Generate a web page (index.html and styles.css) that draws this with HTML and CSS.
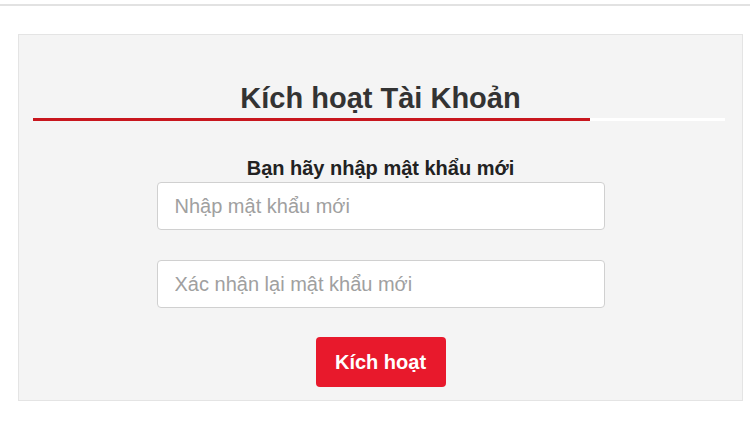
FILE: index.html
```html
<!DOCTYPE html>
<html lang="vi">
<head>
<meta charset="utf-8">
<title>Kích hoạt Tài Khoản</title>
<link rel="stylesheet" href="styles.css">
</head>
<body>
<div class="topbar"></div>
<main class="card">
  <h1 class="title">Kích hoạt Tài Khoản</h1>
  <div class="rule"></div>
  <form class="form">
    <p class="subtitle">Bạn hãy nhập mật khẩu mới</p>
    <input class="field" type="password" placeholder="Nhập mật khẩu mới">
    <input class="field field-second" type="password" placeholder="Xác nhận lại mật khẩu mới">
    <button class="btn" type="button">Kích hoạt</button>
  </form>
</main>
</body>
</html>
```
FILE: styles.css
```css
html, body {
  margin: 0;
  padding: 0;
  background: #ffffff;
  font-family: "Liberation Sans", Arial, sans-serif;
}
.topbar {
  height: 4px;
  border-bottom: 2px solid #e2e2e2;
}
.card {
  box-sizing: border-box;
  margin: 28px 7px 0 18px;
  height: 367px;
  background: #f4f4f4;
  border: 1px solid #e4e4e4;
  padding: 46px 0 0 0;
  display: flex;
  flex-direction: column;
  align-items: center;
}
.title {
  margin: 0;
  font-size: 29px;
  line-height: 34px;
  font-weight: bold;
  color: #333333;
}
.rule {
  align-self: flex-start;
  margin: 3px 0 0 14px;
  width: 692px;
  height: 3px;
  background: linear-gradient(to right, #c8161d 0, #c8161d 80.5%, #ffffff 80.5%, #ffffff 100%);
}
.form {
  margin: 35px 0 0 0;
  display: flex;
  flex-direction: column;
  align-items: center;
}
.subtitle {
  margin: 0 0 2px 0;
  font-size: 20px;
  line-height: 24px;
  font-weight: bold;
  color: #222;
}
.field {
  box-sizing: border-box;
  width: 448px;
  height: 48px;
  padding: 0 17px;
  border: 1px solid #d0d0d0;
  border-radius: 4px;
  background: #ffffff;
  font-family: "Liberation Sans", Arial, sans-serif;
  font-size: 20px;
  color: #333;
  outline: none;
}
.field::placeholder {
  color: #a0a0a0;
}
.field-second {
  margin-top: 30px;
}
.btn {
  margin-top: 29px;
  width: 130px;
  height: 50px;
  border: none;
  border-radius: 4px;
  background: #e8192c;
  color: #ffffff;
  font-family: "Liberation Sans", Arial, sans-serif;
  font-size: 20px;
  font-weight: bold;
  cursor: pointer;
}
```
